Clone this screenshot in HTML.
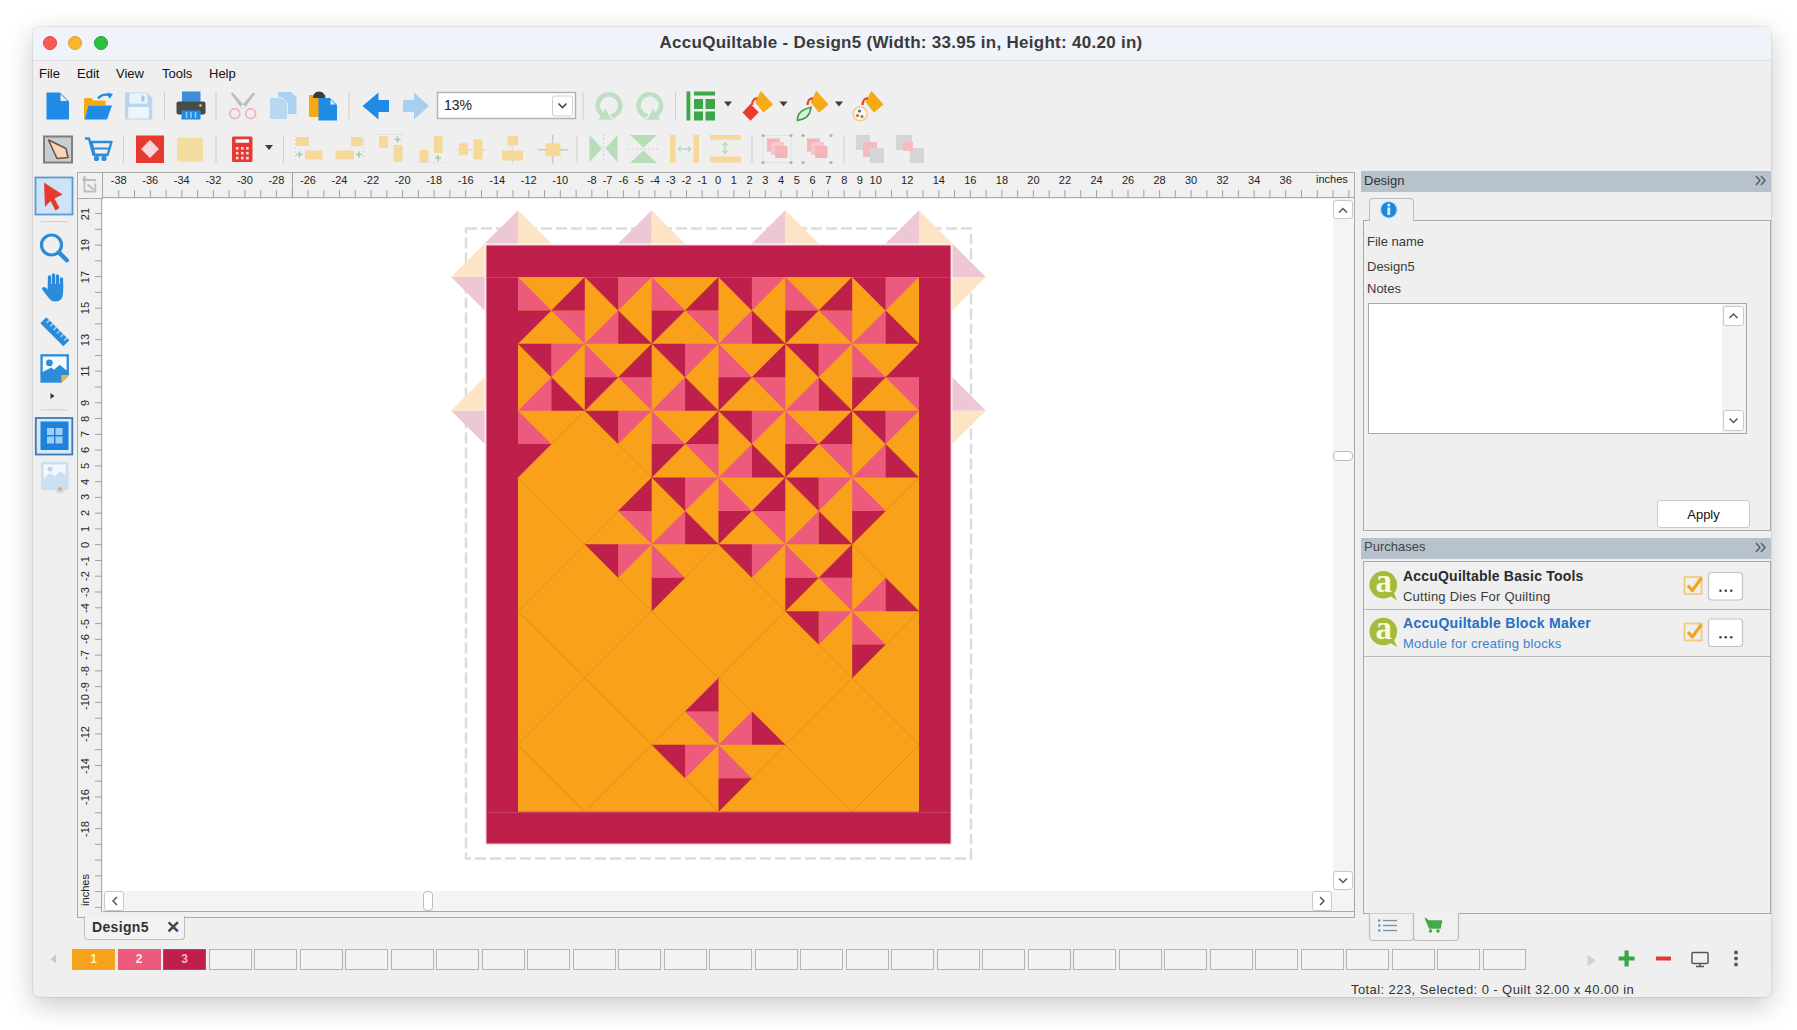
<!DOCTYPE html><html><head><meta charset="utf-8"><style>
*{box-sizing:border-box;margin:0;padding:0}
html,body{width:1797px;height:1030px;overflow:hidden;background:#fff;font-family:"Liberation Sans",sans-serif;color:#222}
.a{position:absolute}
.win{position:absolute;left:33px;top:27px;width:1738px;height:970px;border-radius:6px;background:#EFEFEF;box-shadow:0 8px 28px rgba(0,0,0,0.22),0 0 0 1px rgba(0,0,0,0.06);overflow:hidden}
.tl{position:absolute;top:36px;width:14px;height:14px;border-radius:50%}
.menu{position:absolute;top:66px;font-size:13px;color:#111}
.sep{position:absolute;width:1px;background:#CFCFCF}
.rl{position:absolute;font-size:11px;color:#1E1E1E;white-space:nowrap}
.sw{position:absolute;top:949px;width:43px;height:21px;border:1px solid #B4B4B4;background:#F3F3F3}
.btn{position:absolute;background:#fff;border:1px solid #C9C9C9;border-radius:3px}
</style></head><body>

<div class="win"></div>
<div class="a" style="left:33px;top:27px;width:1738px;height:34px;background:#F0F3FA;border-radius:6px 6px 0 0;border-bottom:1px solid #DCDDE2"></div>
<div class="tl" style="left:43px;background:#F45C55;border:1px solid #E0443E"></div>
<div class="tl" style="left:68px;background:#F8B72E;border:1px solid #DE9F1E"></div>
<div class="tl" style="left:94px;background:#2AC13F;border:1px solid #1EA52F"></div>
<div class="a" style="left:0;width:1797px;top:32.5px;text-align:center;font-size:17px;letter-spacing:0.28px;font-weight:bold;color:#3A3A3A;padding-left:5px">AccuQuiltable - Design5 (Width: 33.95 in, Height: 40.20 in)</div>
<div class="menu" style="left:39px">File</div>
<div class="menu" style="left:77px">Edit</div>
<div class="menu" style="left:116px">View</div>
<div class="menu" style="left:162px">Tools</div>
<div class="menu" style="left:209px">Help</div>
<svg class="a" style="left:0;top:0" width="1797" height="1030" viewBox="0 0 1797 1030">
<path d="M46.5,92.5 H60 L69,101.5 V119.5 H46.5Z" fill="#1F8BE6"/>
<path d="M60.5,94 V101 H67.5Z" fill="#DDF1FF"/>
<path d="M84,119.5 V99.5 Q84,98 85.5,98 H91 L93.5,100.5 H105.5 V105.5 H89Z" fill="#F5A913"/>
<path d="M84.5,119.5 L88.5,105.5 H112 L107,119.5Z" fill="#1F8BE6"/>
<path d="M98,98.5 Q103,93 109.5,95.5" stroke="#1F8BE6" stroke-width="2.2" fill="none"/><path d="M107,92.5 L113,94 L109.5,99Z" fill="#1F8BE6"/>
<path d="M125,92.5 H147 L152.2,97.7 V119.5 H125Z" fill="#B9D6EE"/>
<rect x="129.5" y="93.3" width="17.8" height="10.4" fill="#E6F4FC"/><rect x="141.5" y="95.5" width="3" height="6" rx="1" fill="#A9C9E3"/>
<rect x="128.2" y="107" width="20.6" height="11.5" fill="#EEF5FB"/>
<rect x="164.0" y="92" width="1" height="28" fill="#CDCDCD"/>
<rect x="182" y="91.5" width="18.5" height="11" fill="#3E8EDC"/>
<rect x="176.5" y="101.5" width="29" height="13" rx="2" fill="#4A4A4A"/>
<circle cx="200.5" cy="105.5" r="1.3" fill="#E8D44A"/>
<rect x="181.5" y="110.5" width="19" height="9" fill="#1F8BE6"/>
<path d="M186.5,112 V118 M191,112 V118 M195.5,112 V118" stroke="#8FD0FF" stroke-width="1.5"/>
<rect x="215.5" y="92" width="1" height="28" fill="#CDCDCD"/>
<path d="M230.8,93.5 L232.8,92.5 L246,107.5 L241.8,109Z M255.2,93.5 L253.2,92.5 L240,107.5 L244.2,109Z" fill="#BDBDBD"/>
<circle cx="234.8" cy="113.6" r="4.9" fill="none" stroke="#F0B8BE" stroke-width="1.9"/>
<circle cx="250.6" cy="113.6" r="4.9" fill="none" stroke="#F0B8BE" stroke-width="1.9"/>
<path d="M278,92 H291 L296.5,97.5 V114 H278Z" fill="#AED0EF"/>
<path d="M269.5,97.5 H282 L287.5,103 V119.5 H269.5Z" fill="#B9D7F1" stroke="#EEF5FB" stroke-width="0.8"/>
<rect x="309" y="95" width="17" height="22" fill="#F5A913"/>
<path d="M313,98 Q313,91.5 319,91.5 Q325,91.5 325,98Z" fill="#3B3B3B"/>
<path d="M318.5,98 H330 L337,105 V120.5 H318.5Z" fill="#1F8BE6"/>
<path d="M330.5,99.5 V104.5 H335.5Z" fill="#DDF1FF"/>
<rect x="348.5" y="92" width="1" height="27" fill="#CDCDCD"/>
<path d="M362.5,106 L378.5,92.5 V100 H389 V112 H378.5 V119.5Z" fill="#1F8BE6"/>
<path d="M429,106 L414,92.5 V100 H403 V112 H414 V119.5Z" fill="#A9CFF0"/>
<rect x="437.5" y="92.5" width="138" height="26" fill="#fff" stroke="#B3B3B3" stroke-width="1.5"/>
<rect x="552.5" y="96" width="20" height="20" rx="2" fill="#fff" stroke="#CFCFCF"/>
<path d="M558.5,103.5 L562.5,107.5 L566.5,103.5" stroke="#444" stroke-width="1.6" fill="none"/>
<rect x="582.5" y="92" width="1" height="28" fill="#CDCDCD"/>
<circle cx="609" cy="105.5" r="11.3" fill="none" stroke="#BFDFC2" stroke-width="4.6"/><path d="M598.5,119.8 L605.5,108.5 L613.5,119.8Z" fill="#BFDFC2"/><path d="M607,110 L612,119" stroke="#F2F5F2" stroke-width="1.4"/>
<circle cx="649.7" cy="105.5" r="11.3" fill="none" stroke="#BFDFC2" stroke-width="4.6"/><path d="M645,119.8 L653,108.5 L660,119.8Z" fill="#BFDFC2"/><path d="M651.5,110 L646.5,119" stroke="#F2F5F2" stroke-width="1.4"/>
<rect x="675.0" y="92" width="1" height="28" fill="#CDCDCD"/>
<rect x="686.5" y="91.5" width="3.8" height="29" fill="#3DA648"/><rect x="694" y="91.5" width="21" height="4" fill="#3DA648"/>
<rect x="694" y="99" width="9" height="10" fill="#3DA648"/><rect x="705.5" y="99" width="9.5" height="10" fill="#3DA648"/><rect x="694" y="111.5" width="9" height="9" fill="#3DA648"/><rect x="705.5" y="111.5" width="9.5" height="9" fill="#3DA648"/>
<path d="M724,101.5 H732 L728,106.5Z" fill="#3C3C3C"/>
<path d="M761,91.5 L772.5,104.5 L763.5,112 L755.5,102Z" fill="#F6AA14" stroke="#F6AA14" stroke-width="1" stroke-linejoin="round"/><path d="M752,105 Q752.5,98 757.5,98.5" stroke="#D24A32" stroke-width="2.2" fill="none"/>
<path d="M742.5,112.5 L750.5,104 L758.7,112.2 L750.5,120.7Z" fill="#EA3B30"/>
<path d="M779.5,101.5 H787.5 L783.5,106.5Z" fill="#3C3C3C"/>
<path d="M816.5,91.5 L828.0,104.5 L819.0,112 L811.0,102Z" fill="#F6AA14" stroke="#F6AA14" stroke-width="1" stroke-linejoin="round"/><path d="M807.5,105 Q808.0,98 813.0,98.5" stroke="#D24A32" stroke-width="2.2" fill="none"/>
<path d="M797.5,120.5 Q797,110.5 811,107.3 Q810,119 797.5,120.5Z" fill="#D8F2D8" stroke="#3E9A48" stroke-width="1.6"/>
<path d="M835,101.5 H843 L839,106.5Z" fill="#3C3C3C"/>
<path d="M871.5,91.5 L883.0,104.5 L874.0,112 L866.0,102Z" fill="#F6AA14" stroke="#F6AA14" stroke-width="1" stroke-linejoin="round"/><path d="M862.5,105 Q863.0,98 868.0,98.5" stroke="#D24A32" stroke-width="2.2" fill="none"/>
<circle cx="860.2" cy="113.8" r="7" fill="#FBF4EA" stroke="#F3CD85" stroke-width="1.5"/><circle cx="859.5" cy="111" r="1.6" fill="#3E6FC8"/><circle cx="857.5" cy="115.5" r="1.5" fill="#D8583A"/><circle cx="862" cy="116.5" r="1.5" fill="#5A9E4A"/>
<rect x="44" y="136.5" width="28" height="26" fill="#C9CDD2" stroke="#7F7F7F" stroke-width="2"/>
<path d="M48.5,140 L66,148.5 L68,157.5 L57,158.5Z" fill="#F9D6BB" stroke="#6E5444" stroke-width="1.6" stroke-linejoin="round"/>
<path d="M85,138.5 H89 L93.5,155 H107" stroke="#2D8BDC" stroke-width="2.4" fill="none" stroke-linejoin="round"/>
<path d="M91.5,142 H111.5 L107.5,155 H94.5Z" fill="none" stroke="#2D8BDC" stroke-width="2.4" stroke-linejoin="round"/><path d="M93,148.5 H109" stroke="#2D8BDC" stroke-width="2"/>
<circle cx="96.5" cy="158.5" r="2.6" fill="#2D8BDC"/><circle cx="104" cy="158.5" r="2.6" fill="#2D8BDC"/>
<rect x="123.0" y="136" width="1" height="27" fill="#CDCDCD"/>
<rect x="136" y="135.5" width="28" height="27.5" fill="#E8392F"/>
<path d="M150,140 L159,149 L150,158 L141,149Z" fill="#F8D7DB"/>
<rect x="177" y="137.5" width="26" height="24" rx="2.5" fill="#F5DDA0"/>
<rect x="215.5" y="136" width="1" height="27" fill="#CDCDCD"/>
<rect x="232" y="136.5" width="20.5" height="25.5" rx="1.5" fill="#E53935"/>
<rect x="235.5" y="139.3" width="13.5" height="3.4" fill="#fff"/>
<rect x="235.89999999999998" y="147.0" width="2.6" height="2.6" fill="#FFD9D9"/>
<rect x="241.0" y="147.0" width="2.6" height="2.6" fill="#FFD9D9"/>
<rect x="246.1" y="147.0" width="2.6" height="2.6" fill="#FFD9D9"/>
<rect x="235.89999999999998" y="151.89999999999998" width="2.6" height="2.6" fill="#FFD9D9"/>
<rect x="241.0" y="151.89999999999998" width="2.6" height="2.6" fill="#FFD9D9"/>
<rect x="246.1" y="151.89999999999998" width="2.6" height="2.6" fill="#FFD9D9"/>
<rect x="235.89999999999998" y="156.79999999999998" width="2.6" height="2.6" fill="#FFD9D9"/>
<rect x="241.0" y="156.79999999999998" width="2.6" height="2.6" fill="#FFD9D9"/>
<rect x="246.1" y="156.79999999999998" width="2.6" height="2.6" fill="#FFD9D9"/>
<path d="M265,145.0 H273 L269,150.0Z" fill="#3C3C3C"/>
<rect x="283.0" y="136" width="1" height="27" fill="#CDCDCD"/>
<path d="M295.5,135 V163" stroke="#D8D8D8" stroke-dasharray="2 2"/><rect x="296" y="137" width="13" height="9" fill="#F6D998"/><rect x="305" y="150.5" width="17.5" height="9" fill="#F6D998"/><path d="M296.5,154.5 H302.5 M299.5,151.5 V157.5" stroke="#9ACF9E" stroke-width="1.5"/>
<path d="M363.5,135 V163" stroke="#D8D8D8" stroke-dasharray="2 2"/><rect x="351" y="137" width="11.5" height="9" fill="#F6D998"/><rect x="335.5" y="150.5" width="18.5" height="9" fill="#F6D998"/><path d="M356,154.5 H362 M359,151.5 V157.5" stroke="#9ACF9E" stroke-width="1.5"/>
<path d="M376.5,134.5 H405" stroke="#D8D8D8" stroke-dasharray="2 2"/><rect x="379" y="136" width="9" height="12" fill="#F6D998"/><rect x="393.5" y="145" width="9" height="17" fill="#F6D998"/><path d="M394.5,139.5 H400.5 M397.5,136.5 V142.5" stroke="#9ACF9E" stroke-width="1.5"/>
<path d="M417,162.5 H446" stroke="#D8D8D8" stroke-dasharray="2 2"/><rect x="419.5" y="150" width="9" height="12" fill="#F6D998"/><rect x="434" y="136" width="8.5" height="17" fill="#F6D998"/><path d="M435,158 H441 M438,155 V161" stroke="#9ACF9E" stroke-width="1.5"/>
<path d="M456.5,149.8 H486" stroke="#D8D8D8"/><rect x="459" y="143.3" width="9" height="12" fill="#F6D998"/><rect x="473.5" y="139.3" width="9" height="20" fill="#F6D998"/>
<path d="M512.3,134.5 V164.5" stroke="#D8D8D8"/><rect x="507.5" y="136" width="10.5" height="9.5" fill="#F6D998"/><rect x="502" y="150.5" width="21" height="10" fill="#F6D998"/>
<path d="M537.5,149.8 H568 M552.6,135 V163.5" stroke="#C9C9C9" stroke-width="1.5"/><rect x="545.5" y="143.3" width="15" height="13" rx="2" fill="#F6D998"/>
<rect x="576.5" y="136" width="1" height="27" fill="#CDCDCD"/>
<path d="M589.5,135 L602,148.5 L589.5,162Z M617.5,135 L605.5,148.5 L617.5,162Z" fill="#B5DDB8"/><path d="M603.5,134 V163" stroke="#CFCFCF" stroke-dasharray="2 2"/>
<path d="M630,135 H657 L643.5,147.5Z M630,163 H657 L643.5,150.5Z" fill="#B5DDB8"/><path d="M628,149 H660" stroke="#CFCFCF" stroke-dasharray="2 2"/>
<rect x="670" y="135" width="5.5" height="28" fill="#F6D998"/><rect x="693.5" y="135" width="5.5" height="28" fill="#F6D998"/><path d="M678,149 H691 M678,149 l3,-2.5 M678,149 l3,2.5 M691,149 l-3,-2.5 M691,149 l-3,2.5" stroke="#B5DDB8" stroke-width="1.4"/>
<rect x="710" y="135" width="31" height="4.8" fill="#F6D998"/><rect x="710" y="156.5" width="31" height="6" fill="#F6D998"/><path d="M725,142.5 V153.5 M725,142.5 l-2.5,3 M725,142.5 l2.5,3 M725,153.5 l-2.5,-3 M725,153.5 l2.5,-3" stroke="#B5DDB8" stroke-width="1.4"/>
<rect x="751.5" y="136" width="1" height="27" fill="#CDCDCD"/>
<rect x="763" y="135.5" width="28" height="27" fill="none" stroke="#DADDE0" stroke-width="0.8"/>
<rect x="767" y="138.5" width="13" height="13" fill="#F5B4B8"/><rect x="771" y="142" width="13" height="13" fill="#F7C6CC"/><rect x="775" y="146" width="12.5" height="12" fill="#F5B4B8"/>
<circle cx="803" cy="135.5" r="1.6" fill="#B0B0B0"/>
<circle cx="831" cy="135.5" r="1.6" fill="#B0B0B0"/>
<circle cx="803" cy="162.5" r="1.6" fill="#B0B0B0"/>
<circle cx="831" cy="162.5" r="1.6" fill="#B0B0B0"/>
<rect x="807" y="138.5" width="13" height="13" fill="#F5B4B8"/><rect x="811" y="142" width="13" height="13" fill="#F7C6CC"/><rect x="815" y="146" width="12.5" height="12" fill="#F5B4B8"/>
<circle cx="763" cy="135.5" r="1.6" fill="#B0B0B0"/>
<circle cx="791" cy="135.5" r="1.6" fill="#B0B0B0"/>
<circle cx="763" cy="162.5" r="1.6" fill="#B0B0B0"/>
<circle cx="791" cy="162.5" r="1.6" fill="#B0B0B0"/>
<rect x="843.5" y="136" width="1" height="27" fill="#CDCDCD"/>
<rect x="856" y="135" width="14" height="15" fill="#D5D5D5"/><rect x="863" y="142" width="14" height="15" fill="#F4BBC2"/><rect x="870" y="148" width="14" height="15" fill="#D5D5D5"/>
<rect x="896" y="135" width="16" height="15" fill="#D5D5D5"/><rect x="910" y="148" width="14" height="15" fill="#D5D5D5"/><rect x="903" y="142" width="10" height="9" fill="#F4BBC2"/>
<rect x="35.5" y="177.5" width="37" height="37" fill="#CFE3F6" stroke="#5B9BD5" stroke-width="1.8"/>
<path d="M44,182.5 L62.5,194.5 L54.5,198.5 L59.5,208 L55.5,210.5 L50.5,201 L45,207Z" fill="#E8392F"/>
<rect x="40.5" y="221" width="28" height="1.2" fill="#D3D3D3"/>
<circle cx="51.5" cy="245" r="10" fill="none" stroke="#2D8BDC" stroke-width="3.2"/><path d="M58.8,252.3 L66.8,260.3" stroke="#2D8BDC" stroke-width="4.4" stroke-linecap="round"/>
<path d="M49.5,288 V277 M53.5,286 V275 M57.5,286 V276 M61.5,288 V279" stroke="#2D8BDC" stroke-width="3.3" stroke-linecap="round"/>
<path d="M47.8,284 H63.2 V292 Q63.2,301.5 55.5,301.5 Q51,301.5 48,297 L42.5,290 Q41.2,288 43,287.2 Q45,286.5 47.8,289.5Z" fill="#2D8BDC"/>
<path d="M40.3,323.2 L46.3,317.2 L69.3,340.2 L63.3,346.2Z" fill="#2D8BDC"/>
<path d="M46.5,323 L49.5,320 M50,326.5 L53,323.5 M53.5,330 L56.5,327 M57,333.5 L60,330.5 M60.5,337 L63.5,334 M64,340.5 L67,337.5" stroke="#9ED3FA" stroke-width="1.6"/>
<rect x="40.4" y="354.2" width="28.5" height="28.5" fill="#2D8BDC"/>
<path d="M42.7,356.5 H66.6 V370.5 L59.6,364.8 L54,369.8 L51.2,367.5 L42.7,372Z" fill="#F4FAFF"/>
<circle cx="49.4" cy="362.9" r="3.3" fill="#2D8BDC"/>
<path d="M61.2,383.2 H69.4 V374.8Z" fill="#EFEFEF"/><path d="M61.4,382.7 V375 H68.9Z" fill="#F2B63A"/>
<path d="M50.5,393 L54.5,396 L50.5,399Z" fill="#333"/>
<rect x="40.5" y="409.2" width="27" height="1.2" fill="#D3D3D3"/>
<rect x="35.8" y="418" width="36.5" height="36.5" fill="#D3EAFB" stroke="#3F78B5" stroke-width="1.8"/>
<rect x="40.5" y="421.5" width="28" height="28.5" fill="#1E82DA"/>
<rect x="47" y="428" width="7" height="7" fill="#9CCFF7"/><rect x="55.5" y="428" width="7" height="7" fill="#9CCFF7"/><rect x="47" y="436.5" width="7" height="7" fill="#9CCFF7"/><rect x="55.5" y="436.5" width="7" height="7" fill="#9CCFF7"/>
<rect x="41" y="462" width="27.5" height="28" fill="#C9E0F3"/><rect x="43.5" y="464.5" width="22" height="14" fill="#F2F8FD"/><circle cx="50" cy="469" r="2.5" fill="#B8D6F0"/><path d="M43.5,478.5 L50,473 L55,476 L60,471 L65.5,475 V478.5Z" fill="#C9E0F3"/><circle cx="60" cy="489" r="4.5" fill="#D9D9D9"/><circle cx="60" cy="489" r="2" fill="#B5B5B5"/>
</svg>
<div class="a" style="left:444px;top:97px;font-size:14px;color:#222">13%</div>
<div class="a" style="left:77px;top:172px;width:1278px;height:746px;border:1px solid #A9A9A9;background:#F0F0F0"></div>
<div class="a" style="left:103px;top:199px;width:1230px;height:692px;background:#fff"></div>
<div class="a" style="left:78px;top:173px;width:25px;height:26px;border-right:1px solid #A9A9A9;border-bottom:1px solid #A9A9A9;background:#F0F0F0"></div>
<div class="a" style="left:103px;top:173px;width:1251px;height:25px;border-bottom:1px solid #A9A9A9;background:#F0F0F0"></div>
<div class="a" style="left:78px;top:199px;width:24px;height:713px;border-right:1px solid #A9A9A9;background:#F0F0F0"></div>
<svg class="a" style="left:0;top:0" width="1797" height="1030"><path d="M118.7,190 V198 M134.5,190 V198 M150.3,190 V198 M166.1,190 V198 M181.8,190 V198 M197.6,190 V198 M213.4,190 V198 M229.1,190 V198 M244.9,190 V198 M260.7,190 V198 M276.4,190 V198 M292.2,190 V198 M308.0,190 V198 M323.8,190 V198 M339.5,190 V198 M355.3,190 V198 M371.1,190 V198 M386.8,190 V198 M402.6,190 V198 M418.4,190 V198 M434.1,190 V198 M449.9,190 V198 M465.7,190 V198 M481.5,190 V198 M497.2,190 V198 M513.0,190 V198 M528.8,190 V198 M544.5,190 V198 M560.3,190 V198 M576.1,190 V198 M591.8,190 V198 M607.6,190 V198 M623.4,190 V198 M639.1,190 V198 M654.9,190 V198 M670.7,190 V198 M686.5,190 V198 M702.2,190 V198 M718.0,190 V198 M733.8,190 V198 M749.5,190 V198 M765.3,190 V198 M781.1,190 V198 M796.9,190 V198 M812.6,190 V198 M828.4,190 V198 M844.2,190 V198 M859.9,190 V198 M875.7,190 V198 M891.5,190 V198 M907.2,190 V198 M923.0,190 V198 M938.8,190 V198 M954.5,190 V198 M970.3,190 V198 M986.1,190 V198 M1001.9,190 V198 M1017.6,190 V198 M1033.4,190 V198 M1049.2,190 V198 M1064.9,190 V198 M1080.7,190 V198 M1096.5,190 V198 M1112.2,190 V198 M1128.0,190 V198 M1143.8,190 V198 M1159.6,190 V198 M1175.3,190 V198 M1191.1,190 V198 M1206.9,190 V198 M1222.6,190 V198 M1238.4,190 V198 M1254.2,190 V198 M1269.9,190 V198 M1285.7,190 V198 M1301.5,190 V198 M1317.3,190 V198 M1333.0,190 V198 M1348.8,190 V198 M95,907.4 H102 M95,891.6 H102 M95,875.9 H102 M95,860.1 H102 M95,844.3 H102 M95,828.6 H102 M95,812.8 H102 M95,797.0 H102 M95,781.2 H102 M95,765.5 H102 M95,749.7 H102 M95,733.9 H102 M95,718.2 H102 M95,702.4 H102 M95,686.6 H102 M95,670.9 H102 M95,655.1 H102 M95,639.3 H102 M95,623.6 H102 M95,607.8 H102 M95,592.0 H102 M95,576.2 H102 M95,560.5 H102 M95,544.7 H102 M95,528.9 H102 M95,513.2 H102 M95,497.4 H102 M95,481.6 H102 M95,465.9 H102 M95,450.1 H102 M95,434.3 H102 M95,418.5 H102 M95,402.8 H102 M95,387.0 H102 M95,371.2 H102 M95,355.5 H102 M95,339.7 H102 M95,323.9 H102 M95,308.2 H102 M95,292.4 H102 M95,276.6 H102 M95,260.8 H102 M95,245.1 H102 M95,229.3 H102 M95,213.5 H102" stroke="#A0A0A0" stroke-width="1"/><path d="M292.5,173 V198" stroke="#A0A0A0"/></svg>
<div class="rl" style="left:98.7px;width:40px;text-align:center;top:174px">-38</div>
<div class="rl" style="left:130.3px;width:40px;text-align:center;top:174px">-36</div>
<div class="rl" style="left:161.8px;width:40px;text-align:center;top:174px">-34</div>
<div class="rl" style="left:193.4px;width:40px;text-align:center;top:174px">-32</div>
<div class="rl" style="left:224.9px;width:40px;text-align:center;top:174px">-30</div>
<div class="rl" style="left:256.4px;width:40px;text-align:center;top:174px">-28</div>
<div class="rl" style="left:288.0px;width:40px;text-align:center;top:174px">-26</div>
<div class="rl" style="left:319.5px;width:40px;text-align:center;top:174px">-24</div>
<div class="rl" style="left:351.1px;width:40px;text-align:center;top:174px">-22</div>
<div class="rl" style="left:382.6px;width:40px;text-align:center;top:174px">-20</div>
<div class="rl" style="left:414.1px;width:40px;text-align:center;top:174px">-18</div>
<div class="rl" style="left:445.7px;width:40px;text-align:center;top:174px">-16</div>
<div class="rl" style="left:477.2px;width:40px;text-align:center;top:174px">-14</div>
<div class="rl" style="left:508.8px;width:40px;text-align:center;top:174px">-12</div>
<div class="rl" style="left:540.3px;width:40px;text-align:center;top:174px">-10</div>
<div class="rl" style="left:571.8px;width:40px;text-align:center;top:174px">-8</div>
<div class="rl" style="left:587.6px;width:40px;text-align:center;top:174px">-7</div>
<div class="rl" style="left:603.4px;width:40px;text-align:center;top:174px">-6</div>
<div class="rl" style="left:619.1px;width:40px;text-align:center;top:174px">-5</div>
<div class="rl" style="left:634.9px;width:40px;text-align:center;top:174px">-4</div>
<div class="rl" style="left:650.7px;width:40px;text-align:center;top:174px">-3</div>
<div class="rl" style="left:666.5px;width:40px;text-align:center;top:174px">-2</div>
<div class="rl" style="left:682.2px;width:40px;text-align:center;top:174px">-1</div>
<div class="rl" style="left:698.0px;width:40px;text-align:center;top:174px">0</div>
<div class="rl" style="left:713.8px;width:40px;text-align:center;top:174px">1</div>
<div class="rl" style="left:729.5px;width:40px;text-align:center;top:174px">2</div>
<div class="rl" style="left:745.3px;width:40px;text-align:center;top:174px">3</div>
<div class="rl" style="left:761.1px;width:40px;text-align:center;top:174px">4</div>
<div class="rl" style="left:776.9px;width:40px;text-align:center;top:174px">5</div>
<div class="rl" style="left:792.6px;width:40px;text-align:center;top:174px">6</div>
<div class="rl" style="left:808.4px;width:40px;text-align:center;top:174px">7</div>
<div class="rl" style="left:824.2px;width:40px;text-align:center;top:174px">8</div>
<div class="rl" style="left:839.9px;width:40px;text-align:center;top:174px">9</div>
<div class="rl" style="left:855.7px;width:40px;text-align:center;top:174px">10</div>
<div class="rl" style="left:887.2px;width:40px;text-align:center;top:174px">12</div>
<div class="rl" style="left:918.8px;width:40px;text-align:center;top:174px">14</div>
<div class="rl" style="left:950.3px;width:40px;text-align:center;top:174px">16</div>
<div class="rl" style="left:981.9px;width:40px;text-align:center;top:174px">18</div>
<div class="rl" style="left:1013.4px;width:40px;text-align:center;top:174px">20</div>
<div class="rl" style="left:1044.9px;width:40px;text-align:center;top:174px">22</div>
<div class="rl" style="left:1076.5px;width:40px;text-align:center;top:174px">24</div>
<div class="rl" style="left:1108.0px;width:40px;text-align:center;top:174px">26</div>
<div class="rl" style="left:1139.6px;width:40px;text-align:center;top:174px">28</div>
<div class="rl" style="left:1171.1px;width:40px;text-align:center;top:174px">30</div>
<div class="rl" style="left:1202.6px;width:40px;text-align:center;top:174px">32</div>
<div class="rl" style="left:1234.2px;width:40px;text-align:center;top:174px">34</div>
<div class="rl" style="left:1265.7px;width:40px;text-align:center;top:174px">36</div>
<div class="rl" style="left:1316px;top:173px">inches</div>
<div class="rl" style="left:66px;top:206.5px;width:40px;height:14px;text-align:center;transform:rotate(-90deg)">21</div>
<div class="rl" style="left:66px;top:238.1px;width:40px;height:14px;text-align:center;transform:rotate(-90deg)">19</div>
<div class="rl" style="left:66px;top:269.6px;width:40px;height:14px;text-align:center;transform:rotate(-90deg)">17</div>
<div class="rl" style="left:66px;top:301.2px;width:40px;height:14px;text-align:center;transform:rotate(-90deg)">15</div>
<div class="rl" style="left:66px;top:332.7px;width:40px;height:14px;text-align:center;transform:rotate(-90deg)">13</div>
<div class="rl" style="left:66px;top:364.2px;width:40px;height:14px;text-align:center;transform:rotate(-90deg)">11</div>
<div class="rl" style="left:66px;top:395.8px;width:40px;height:14px;text-align:center;transform:rotate(-90deg)">9</div>
<div class="rl" style="left:66px;top:411.5px;width:40px;height:14px;text-align:center;transform:rotate(-90deg)">8</div>
<div class="rl" style="left:66px;top:427.3px;width:40px;height:14px;text-align:center;transform:rotate(-90deg)">7</div>
<div class="rl" style="left:66px;top:443.1px;width:40px;height:14px;text-align:center;transform:rotate(-90deg)">6</div>
<div class="rl" style="left:66px;top:458.9px;width:40px;height:14px;text-align:center;transform:rotate(-90deg)">5</div>
<div class="rl" style="left:66px;top:474.6px;width:40px;height:14px;text-align:center;transform:rotate(-90deg)">4</div>
<div class="rl" style="left:66px;top:490.4px;width:40px;height:14px;text-align:center;transform:rotate(-90deg)">3</div>
<div class="rl" style="left:66px;top:506.2px;width:40px;height:14px;text-align:center;transform:rotate(-90deg)">2</div>
<div class="rl" style="left:66px;top:521.9px;width:40px;height:14px;text-align:center;transform:rotate(-90deg)">1</div>
<div class="rl" style="left:66px;top:537.7px;width:40px;height:14px;text-align:center;transform:rotate(-90deg)">0</div>
<div class="rl" style="left:66px;top:553.5px;width:40px;height:14px;text-align:center;transform:rotate(-90deg)">-1</div>
<div class="rl" style="left:66px;top:569.2px;width:40px;height:14px;text-align:center;transform:rotate(-90deg)">-2</div>
<div class="rl" style="left:66px;top:585.0px;width:40px;height:14px;text-align:center;transform:rotate(-90deg)">-3</div>
<div class="rl" style="left:66px;top:600.8px;width:40px;height:14px;text-align:center;transform:rotate(-90deg)">-4</div>
<div class="rl" style="left:66px;top:616.6px;width:40px;height:14px;text-align:center;transform:rotate(-90deg)">-5</div>
<div class="rl" style="left:66px;top:632.3px;width:40px;height:14px;text-align:center;transform:rotate(-90deg)">-6</div>
<div class="rl" style="left:66px;top:648.1px;width:40px;height:14px;text-align:center;transform:rotate(-90deg)">-7</div>
<div class="rl" style="left:66px;top:663.9px;width:40px;height:14px;text-align:center;transform:rotate(-90deg)">-8</div>
<div class="rl" style="left:66px;top:679.6px;width:40px;height:14px;text-align:center;transform:rotate(-90deg)">-9</div>
<div class="rl" style="left:66px;top:695.4px;width:40px;height:14px;text-align:center;transform:rotate(-90deg)">-10</div>
<div class="rl" style="left:66px;top:726.9px;width:40px;height:14px;text-align:center;transform:rotate(-90deg)">-12</div>
<div class="rl" style="left:66px;top:758.5px;width:40px;height:14px;text-align:center;transform:rotate(-90deg)">-14</div>
<div class="rl" style="left:66px;top:790.0px;width:40px;height:14px;text-align:center;transform:rotate(-90deg)">-16</div>
<div class="rl" style="left:66px;top:821.6px;width:40px;height:14px;text-align:center;transform:rotate(-90deg)">-18</div>
<div class="rl" style="left:66px;top:883px;width:40px;height:14px;text-align:center;transform:rotate(-90deg)">inches</div>
<svg style="position:absolute;left:0;top:0" width="1797" height="1030" viewBox="0 0 1797 1030">
<rect x="466" y="228.5" width="505" height="630" fill="none" stroke="#DCDCDC" stroke-width="2.5" stroke-dasharray="11 4"/>
<path d="M484.6,243.6 L518.0,210.2 L518.0,243.6ZM618.2,243.6 L651.7,210.2 L651.7,243.6ZM751.9,243.6 L785.3,210.2 L785.3,243.6ZM885.6,243.6 L919.0,210.2 L919.0,243.6ZM451.2,277.0 L484.6,277.0 L484.6,310.4ZM952.4,243.6 L985.8,277.0 L952.4,277.0ZM451.2,410.7 L484.6,410.7 L484.6,444.1ZM952.4,377.2 L985.8,410.7 L952.4,410.7Z" fill="#EDC7D3"/>
<path d="M518.0,210.2 L518.0,243.6 L551.4,243.6ZM651.7,210.2 L651.7,243.6 L685.1,243.6ZM785.3,210.2 L785.3,243.6 L818.7,243.6ZM919.0,210.2 L919.0,243.6 L952.4,243.6ZM451.2,277.0 L484.6,243.6 L484.6,277.0ZM952.4,277.0 L985.8,277.0 L952.4,310.4ZM451.2,410.7 L484.6,377.2 L484.6,410.7ZM952.4,410.7 L985.8,410.7 L952.4,444.1Z" fill="#FCE4C4"/>
<rect x="486" y="245" width="465" height="599" fill="#BE1F4B" stroke="#F7C9D2" stroke-width="1"/>
<rect x="518.0" y="277.0" width="401.0" height="534.7" fill="#F9A11B"/>
<path d="M518.0,744.8 L584.8,811.7M518.0,611.2 L718.5,811.7M518.0,477.5 L852.2,811.7M518.0,343.8 L919.0,744.8M584.8,277.0 L919.0,611.2M518.0,343.8 L584.8,277.0M718.5,277.0 L919.0,477.5M518.0,477.5 L718.5,277.0M852.2,277.0 L919.0,343.8M518.0,611.2 L852.2,277.0M518.0,744.8 L919.0,343.8M584.8,811.7 L919.0,477.5M718.5,811.7 L919.0,611.2M852.2,811.7 L919.0,744.8" stroke="#D98810" stroke-width="1" stroke-opacity="0.75" fill="none"/>
<path d="M518.0,277.0 L518.0,310.4 L551.4,310.4ZM618.2,277.0 L651.7,277.0 L618.2,310.4ZM651.7,277.0 L651.7,310.4 L685.1,310.4ZM751.9,277.0 L785.3,277.0 L751.9,310.4ZM785.3,277.0 L785.3,310.4 L818.7,310.4ZM885.6,277.0 L919.0,277.0 L885.6,310.4ZM551.4,310.4 L584.8,310.4 L584.8,343.8ZM618.2,310.4 L618.2,343.8 L584.8,343.8ZM685.1,310.4 L718.5,310.4 L718.5,343.8ZM751.9,310.4 L751.9,343.8 L718.5,343.8ZM818.8,310.4 L852.2,310.4 L852.2,343.8ZM885.6,310.4 L885.6,343.8 L852.2,343.8ZM551.4,343.8 L584.8,343.8 L551.4,377.2ZM584.8,343.8 L584.8,377.2 L618.2,377.2ZM685.1,343.8 L718.5,343.8 L685.1,377.2ZM718.5,343.8 L718.5,377.2 L751.9,377.2ZM818.8,343.8 L852.2,343.8 L818.8,377.2ZM852.2,343.8 L852.2,377.2 L885.6,377.2ZM551.4,377.2 L551.4,410.7 L518.0,410.7ZM618.2,377.2 L651.7,377.2 L651.7,410.7ZM685.1,377.2 L685.1,410.7 L651.7,410.7ZM751.9,377.2 L785.3,377.2 L785.3,410.7ZM818.7,377.2 L818.7,410.7 L785.3,410.7ZM885.6,377.2 L919.0,377.2 L919.0,410.7ZM518.0,410.7 L518.0,444.1 L551.4,444.1ZM618.2,410.7 L651.7,410.7 L618.2,444.1ZM651.7,410.7 L651.7,444.1 L685.1,444.1ZM751.9,410.7 L785.3,410.7 L751.9,444.1ZM785.3,410.7 L785.3,444.1 L818.7,444.1ZM885.6,410.7 L919.0,410.7 L885.6,444.1ZM685.1,444.1 L718.5,444.1 L718.5,477.5ZM751.9,444.1 L751.9,477.5 L718.5,477.5ZM818.8,444.1 L852.2,444.1 L852.2,477.5ZM885.6,444.1 L885.6,477.5 L852.2,477.5ZM685.1,477.5 L718.5,477.5 L685.1,510.9ZM718.5,477.5 L718.5,510.9 L751.9,510.9ZM818.8,477.5 L852.2,477.5 L818.8,510.9ZM852.2,477.5 L852.2,510.9 L885.6,510.9ZM618.2,510.9 L651.7,510.9 L651.7,544.3ZM685.1,510.9 L685.1,544.3 L651.7,544.3ZM751.9,510.9 L785.3,510.9 L785.3,544.3ZM818.7,510.9 L818.7,544.3 L785.3,544.3ZM618.2,544.3 L651.7,544.3 L618.2,577.7ZM651.7,544.3 L651.7,577.7 L685.1,577.7ZM751.9,544.3 L785.3,544.3 L751.9,577.7ZM785.3,544.3 L785.3,577.7 L818.7,577.7ZM818.8,577.8 L852.2,577.8 L852.2,611.2ZM885.6,577.8 L885.6,611.2 L852.2,611.2ZM818.8,611.2 L852.2,611.2 L818.8,644.6ZM852.2,611.2 L852.2,644.6 L885.6,644.6ZM685.1,711.4 L718.5,711.4 L718.5,744.8ZM751.9,711.4 L751.9,744.8 L718.5,744.8ZM685.1,744.8 L718.5,744.8 L685.1,778.2ZM718.5,744.8 L718.5,778.2 L751.9,778.2Z" fill="#EC5B7B"/>
<path d="M584.8,277.0 L584.8,310.4 L551.4,310.4ZM584.8,277.0 L618.2,277.0 L618.2,310.4ZM718.5,277.0 L718.5,310.4 L685.1,310.4ZM718.5,277.0 L751.9,277.0 L751.9,310.4ZM852.2,277.0 L852.2,310.4 L818.8,310.4ZM852.2,277.0 L885.6,277.0 L885.6,310.4ZM518.0,310.4 L551.4,310.4 L518.0,343.8ZM618.2,310.4 L618.2,343.8 L651.7,343.8ZM651.7,310.4 L685.1,310.4 L651.7,343.8ZM751.9,310.4 L751.9,343.8 L785.3,343.8ZM785.3,310.4 L818.7,310.4 L785.3,343.8ZM885.6,310.4 L885.6,343.8 L919.0,343.8ZM518.0,343.8 L551.4,343.8 L551.4,377.2ZM651.7,343.8 L651.7,377.2 L618.2,377.2ZM651.7,343.8 L685.1,343.8 L685.1,377.2ZM785.3,343.8 L785.3,377.2 L751.9,377.2ZM785.3,343.8 L818.7,343.8 L818.7,377.2ZM919.0,343.8 L919.0,377.2 L885.6,377.2ZM551.4,377.2 L551.4,410.7 L584.8,410.7ZM584.8,377.2 L618.2,377.2 L584.8,410.7ZM685.1,377.2 L685.1,410.7 L718.5,410.7ZM718.5,377.2 L751.9,377.2 L718.5,410.7ZM818.8,377.2 L818.8,410.7 L852.2,410.7ZM852.2,377.2 L885.6,377.2 L852.2,410.7ZM584.8,410.7 L618.2,410.7 L618.2,444.1ZM718.5,410.7 L718.5,444.1 L685.1,444.1ZM718.5,410.7 L751.9,410.7 L751.9,444.1ZM852.2,410.7 L852.2,444.1 L818.8,444.1ZM852.2,410.7 L885.6,410.7 L885.6,444.1ZM518.0,444.1 L551.4,444.1 L518.0,477.5ZM651.7,444.1 L685.1,444.1 L651.7,477.5ZM751.9,444.1 L751.9,477.5 L785.3,477.5ZM785.3,444.1 L818.7,444.1 L785.3,477.5ZM885.6,444.1 L885.6,477.5 L919.0,477.5ZM651.7,477.5 L651.7,510.9 L618.2,510.9ZM651.7,477.5 L685.1,477.5 L685.1,510.9ZM785.3,477.5 L785.3,510.9 L751.9,510.9ZM785.3,477.5 L818.7,477.5 L818.7,510.9ZM685.1,510.9 L685.1,544.3 L718.5,544.3ZM718.5,510.9 L751.9,510.9 L718.5,544.3ZM818.8,510.9 L818.8,544.3 L852.2,544.3ZM852.2,510.9 L885.6,510.9 L852.2,544.3ZM584.8,544.3 L618.2,544.3 L618.2,577.7ZM718.5,544.3 L751.9,544.3 L751.9,577.7ZM852.2,544.3 L852.2,577.7 L818.8,577.7ZM651.7,577.8 L685.1,577.8 L651.7,611.2ZM785.3,577.8 L818.7,577.8 L785.3,611.2ZM885.6,577.8 L885.6,611.2 L919.0,611.2ZM785.3,611.2 L818.7,611.2 L818.7,644.6ZM852.2,644.6 L885.6,644.6 L852.2,678.0ZM718.5,678.0 L718.5,711.4 L685.1,711.4ZM751.9,711.4 L751.9,744.8 L785.3,744.8ZM651.7,744.8 L685.1,744.8 L685.1,778.2ZM718.5,778.2 L751.9,778.2 L718.5,811.7Z" fill="#BE1F4B"/>
<path d="M486,277.5 H951 M486,812.5 H951" stroke="#E07A98" stroke-width="1" stroke-opacity="0.35"/>
</svg>
<div class="a" style="left:1333px;top:199px;width:21px;height:692px;background:#F4F4F4"></div>
<div class="btn" style="left:1333px;top:200px;width:20px;height:19px"></div>
<div class="btn" style="left:1333px;top:871px;width:20px;height:19px"></div>
<div class="a" style="left:1333px;top:451px;width:20px;height:10px;border:1px solid #BDBDBD;border-radius:4px;background:#fff"></div>
<div class="a" style="left:103px;top:891px;width:1251px;height:21px;background:#F4F4F4;border-bottom:1px solid #A9A9A9"></div>
<div class="btn" style="left:104px;top:891px;width:20px;height:20px"></div>
<div class="btn" style="left:1312px;top:891px;width:20px;height:20px"></div>
<div class="a" style="left:423px;top:891px;width:10px;height:20px;border:1px solid #BDBDBD;border-radius:4px;background:#fff"></div>
<div class="a" style="left:84px;top:916px;width:101px;height:24px;border:1px solid #BDBDBD;border-top:none;border-radius:0 0 4px 4px;background:#F2F2F2"></div>
<div class="a" style="left:92px;top:919px;font-size:14px;font-weight:bold;letter-spacing:0.35px;color:#333">Design5</div>
<div class="a" style="left:166px;top:917px;font-size:17px;font-weight:bold;color:#444">&#x2715;</div>
<div class="sw" style="left:72.0px;background:#F7A21C;border-color:#F7A21C;color:#FFE0E6;font-size:12px;font-weight:bold;text-align:center;line-height:19px"><span style="color:#FFF3B0">1</span></div>
<div class="sw" style="left:117.5px;background:#EC5B7B;border-color:#EC5B7B;color:#FFE0E6;font-size:12px;font-weight:bold;text-align:center;line-height:19px"><span style="color:#FFE8EE">2</span></div>
<div class="sw" style="left:163.0px;background:#BE1F4B;border-color:#4C6EA8;color:#FFE0E6;font-size:12px;font-weight:bold;text-align:center;line-height:19px"><span style="color:#FFB3C6">3</span></div>
<div class="sw" style="left:208.5px;background:#F3F3F3;border-color:#B4B4B4;color:#FFE0E6;font-size:12px;font-weight:bold;text-align:center;line-height:19px"></div>
<div class="sw" style="left:254.0px;background:#F3F3F3;border-color:#B4B4B4;color:#FFE0E6;font-size:12px;font-weight:bold;text-align:center;line-height:19px"></div>
<div class="sw" style="left:299.5px;background:#F3F3F3;border-color:#B4B4B4;color:#FFE0E6;font-size:12px;font-weight:bold;text-align:center;line-height:19px"></div>
<div class="sw" style="left:345.0px;background:#F3F3F3;border-color:#B4B4B4;color:#FFE0E6;font-size:12px;font-weight:bold;text-align:center;line-height:19px"></div>
<div class="sw" style="left:390.5px;background:#F3F3F3;border-color:#B4B4B4;color:#FFE0E6;font-size:12px;font-weight:bold;text-align:center;line-height:19px"></div>
<div class="sw" style="left:436.0px;background:#F3F3F3;border-color:#B4B4B4;color:#FFE0E6;font-size:12px;font-weight:bold;text-align:center;line-height:19px"></div>
<div class="sw" style="left:481.5px;background:#F3F3F3;border-color:#B4B4B4;color:#FFE0E6;font-size:12px;font-weight:bold;text-align:center;line-height:19px"></div>
<div class="sw" style="left:527.0px;background:#F3F3F3;border-color:#B4B4B4;color:#FFE0E6;font-size:12px;font-weight:bold;text-align:center;line-height:19px"></div>
<div class="sw" style="left:572.5px;background:#F3F3F3;border-color:#B4B4B4;color:#FFE0E6;font-size:12px;font-weight:bold;text-align:center;line-height:19px"></div>
<div class="sw" style="left:618.0px;background:#F3F3F3;border-color:#B4B4B4;color:#FFE0E6;font-size:12px;font-weight:bold;text-align:center;line-height:19px"></div>
<div class="sw" style="left:663.5px;background:#F3F3F3;border-color:#B4B4B4;color:#FFE0E6;font-size:12px;font-weight:bold;text-align:center;line-height:19px"></div>
<div class="sw" style="left:709.0px;background:#F3F3F3;border-color:#B4B4B4;color:#FFE0E6;font-size:12px;font-weight:bold;text-align:center;line-height:19px"></div>
<div class="sw" style="left:754.5px;background:#F3F3F3;border-color:#B4B4B4;color:#FFE0E6;font-size:12px;font-weight:bold;text-align:center;line-height:19px"></div>
<div class="sw" style="left:800.0px;background:#F3F3F3;border-color:#B4B4B4;color:#FFE0E6;font-size:12px;font-weight:bold;text-align:center;line-height:19px"></div>
<div class="sw" style="left:845.5px;background:#F3F3F3;border-color:#B4B4B4;color:#FFE0E6;font-size:12px;font-weight:bold;text-align:center;line-height:19px"></div>
<div class="sw" style="left:891.0px;background:#F3F3F3;border-color:#B4B4B4;color:#FFE0E6;font-size:12px;font-weight:bold;text-align:center;line-height:19px"></div>
<div class="sw" style="left:936.5px;background:#F3F3F3;border-color:#B4B4B4;color:#FFE0E6;font-size:12px;font-weight:bold;text-align:center;line-height:19px"></div>
<div class="sw" style="left:982.0px;background:#F3F3F3;border-color:#B4B4B4;color:#FFE0E6;font-size:12px;font-weight:bold;text-align:center;line-height:19px"></div>
<div class="sw" style="left:1027.5px;background:#F3F3F3;border-color:#B4B4B4;color:#FFE0E6;font-size:12px;font-weight:bold;text-align:center;line-height:19px"></div>
<div class="sw" style="left:1073.0px;background:#F3F3F3;border-color:#B4B4B4;color:#FFE0E6;font-size:12px;font-weight:bold;text-align:center;line-height:19px"></div>
<div class="sw" style="left:1118.5px;background:#F3F3F3;border-color:#B4B4B4;color:#FFE0E6;font-size:12px;font-weight:bold;text-align:center;line-height:19px"></div>
<div class="sw" style="left:1164.0px;background:#F3F3F3;border-color:#B4B4B4;color:#FFE0E6;font-size:12px;font-weight:bold;text-align:center;line-height:19px"></div>
<div class="sw" style="left:1209.5px;background:#F3F3F3;border-color:#B4B4B4;color:#FFE0E6;font-size:12px;font-weight:bold;text-align:center;line-height:19px"></div>
<div class="sw" style="left:1255.0px;background:#F3F3F3;border-color:#B4B4B4;color:#FFE0E6;font-size:12px;font-weight:bold;text-align:center;line-height:19px"></div>
<div class="sw" style="left:1300.5px;background:#F3F3F3;border-color:#B4B4B4;color:#FFE0E6;font-size:12px;font-weight:bold;text-align:center;line-height:19px"></div>
<div class="sw" style="left:1346.0px;background:#F3F3F3;border-color:#B4B4B4;color:#FFE0E6;font-size:12px;font-weight:bold;text-align:center;line-height:19px"></div>
<div class="sw" style="left:1391.5px;background:#F3F3F3;border-color:#B4B4B4;color:#FFE0E6;font-size:12px;font-weight:bold;text-align:center;line-height:19px"></div>
<div class="sw" style="left:1437.0px;background:#F3F3F3;border-color:#B4B4B4;color:#FFE0E6;font-size:12px;font-weight:bold;text-align:center;line-height:19px"></div>
<div class="sw" style="left:1482.5px;background:#F3F3F3;border-color:#B4B4B4;color:#FFE0E6;font-size:12px;font-weight:bold;text-align:center;line-height:19px"></div>
<div class="a" style="left:1361px;top:171px;width:410px;height:21px;background:#B7C2CC"></div>
<div class="a" style="left:1364px;top:173px;font-size:13px;color:#333">Design</div>
<div class="a" style="left:1363px;top:220px;width:408px;height:311px;border:1px solid #A9A9A9"></div>
<div class="a" style="left:1369px;top:198px;width:45px;height:23px;border:1px solid #BDBDBD;border-bottom:none;border-radius:4px 4px 0 0;background:#EFEFEF"></div>
<div class="a" style="left:1367px;top:234px;font-size:13px;color:#3A3A3A">File name</div>
<div class="a" style="left:1367px;top:258.5px;font-size:13px;color:#3A3A3A">Design5</div>
<div class="a" style="left:1367px;top:281px;font-size:13px;color:#3A3A3A">Notes</div>
<div class="a" style="left:1368px;top:303px;width:379px;height:131px;border:1px solid #A9A9A9;background:#fff"></div>
<div class="a" style="left:1722px;top:304px;width:24px;height:129px;background:#F2F2F2"></div>
<div class="btn" style="left:1723px;top:306px;width:21px;height:20px"></div>
<div class="btn" style="left:1723px;top:410px;width:21px;height:21px"></div>
<div class="btn" style="left:1657px;top:500px;width:93px;height:28px"></div>
<div class="a" style="left:1657px;top:507px;width:93px;text-align:center;font-size:13px;color:#111">Apply</div>
<div class="a" style="left:1361px;top:538px;width:410px;height:21px;background:#B7C2CC"></div>
<div class="a" style="left:1364px;top:539px;font-size:13px;color:#444">Purchases</div>
<div class="a" style="left:1363px;top:561px;width:408px;height:353px;border:1px solid #A9A9A9"></div>
<div class="a" style="left:1364px;top:609px;width:406px;height:1px;background:#B9B9B9"></div>
<div class="a" style="left:1364px;top:656px;width:406px;height:1px;background:#B9B9B9"></div>
<div class="a" style="left:1403px;top:568px;font-size:14px;font-weight:bold;letter-spacing:0.2px;color:#2A2A2A">AccuQuiltable Basic Tools</div>
<div class="a" style="left:1403px;top:589px;font-size:13px;letter-spacing:0.23px;color:#3A3A3A">Cutting Dies For Quilting</div>
<div class="a" style="left:1403px;top:615px;font-size:14px;font-weight:bold;letter-spacing:0.3px;color:#1F70C2">AccuQuiltable Block Maker</div>
<div class="a" style="left:1403px;top:636px;font-size:13px;letter-spacing:0.26px;color:#3A80CC">Module for creating blocks</div>
<svg class="a" style="left:0;top:0" width="1797" height="1030" viewBox="0 0 1797 1030">
<path d="M82.5,180 H96 M84.5,177.5 V191.5 H95.3 V183.5 M87.5,184.5 L93.5,189.5" fill="none" stroke="#BDBDBD" stroke-width="1.8"/><path d="M82.3,178.5 L84.5,175.5 L86.7,178.5Z" fill="#BDBDBD"/>
<path d="M1339,212.5 L1343,208.5 L1347,212.5" stroke="#555" stroke-width="1.5" fill="none"/>
<path d="M1339,878.5 L1343,882.5 L1347,878.5" stroke="#555" stroke-width="1.5" fill="none"/>
<path d="M117,897 L113,901 L117,905" stroke="#555" stroke-width="1.5" fill="none"/>
<path d="M1320,897 L1324,901 L1320,905" stroke="#555" stroke-width="1.5" fill="none"/>
<path d="M1729.5,318 L1733.5,314 L1737.5,318" stroke="#555" stroke-width="1.5" fill="none"/>
<path d="M1729.5,418.5 L1733.5,422.5 L1737.5,418.5" stroke="#555" stroke-width="1.5" fill="none"/>
<path d="M1756,176.0 L1760,180.5 L1756,185.0 M1761,176.0 L1765,180.5 L1761,185.0" stroke="#5A5A5A" stroke-width="1.4" fill="none"/>
<path d="M1756,543.0 L1760,547.5 L1756,552.0 M1761,543.0 L1765,547.5 L1761,552.0" stroke="#5A5A5A" stroke-width="1.4" fill="none"/>
<circle cx="1388.8" cy="209.7" r="9.3" fill="#C9E7FF"/><circle cx="1388.8" cy="209.7" r="7.8" fill="#1E86DC"/><circle cx="1388.8" cy="205" r="1.5" fill="#D5F0FF"/><rect x="1387.4" y="207.5" width="2.8" height="7.5" fill="#D5F0FF"/>
<circle cx="1383.3" cy="584.8" r="13.8" fill="#A6BA3E"/><path d="M1388,594.8 L1397,600.3 L1393,590.8Z" fill="#A6BA3E"/>
<text x="1383.8" y="592.0" font-family="Liberation Serif" font-weight="bold" font-size="33" fill="#F6FBD8" text-anchor="middle">a</text>
<circle cx="1383.3" cy="631.5" r="13.8" fill="#A6BA3E"/><path d="M1388,641.5 L1397,647.0 L1393,637.5Z" fill="#A6BA3E"/>
<text x="1383.8" y="638.7" font-family="Liberation Serif" font-weight="bold" font-size="33" fill="#F6FBD8" text-anchor="middle">a</text>
<rect x="1684.5" y="577.0" width="17" height="17" fill="none" stroke="#F5CB7A" stroke-width="1.8"/>
<path d="M1688,585.5 L1692.3,590.5 L1701.5,578.0" stroke="#F2A41F" stroke-width="3.2" fill="none" stroke-linejoin="round"/>
<rect x="1708.5" y="572.5" width="34" height="27.5" rx="3" fill="#fff" stroke="#C4C4C4" stroke-width="1.2"/>
<circle cx="1720.5" cy="590.8" r="1.3" fill="#444"/>
<circle cx="1725.8" cy="590.8" r="1.3" fill="#444"/>
<circle cx="1731.2" cy="590.8" r="1.3" fill="#444"/>
<rect x="1684.5" y="623.5" width="17" height="17" fill="none" stroke="#F5CB7A" stroke-width="1.8"/>
<path d="M1688,632 L1692.3,637 L1701.5,624.5" stroke="#F2A41F" stroke-width="3.2" fill="none" stroke-linejoin="round"/>
<rect x="1708.5" y="619" width="34" height="27.5" rx="3" fill="#fff" stroke="#C4C4C4" stroke-width="1.2"/>
<circle cx="1720.5" cy="637.3" r="1.3" fill="#444"/>
<circle cx="1725.8" cy="637.3" r="1.3" fill="#444"/>
<circle cx="1731.2" cy="637.3" r="1.3" fill="#444"/>
<path d="M1369.5,913.5 V937 Q1369.5,940.5 1373,940.5 H1410 Q1413.5,940.5 1413.5,937 V913.5" fill="#F0F0F0" stroke="#BDBDBD" stroke-width="1.2"/>
<path d="M1413.5,913.5 V937 Q1413.5,940.5 1417,940.5 H1455 Q1458.5,940.5 1458.5,937 V913.5" fill="#F0F0F0" stroke="#BDBDBD" stroke-width="1.2"/>
<rect x="1414.2" y="912" width="43.6" height="3" fill="#EFEFEF"/>
<rect x="1378.3" y="919.5" width="2" height="2" fill="#3C78C0"/><rect x="1383" y="919.9" width="14" height="1.3" fill="#7A8FA8"/>
<rect x="1378.3" y="924.5" width="2" height="2" fill="#3C78C0"/><rect x="1383" y="924.9" width="14" height="1.3" fill="#7A8FA8"/>
<rect x="1378.3" y="929.5" width="2" height="2" fill="#3C78C0"/><rect x="1383" y="929.9" width="14" height="1.3" fill="#7A8FA8"/>
<path d="M1425.5,918.5 L1428.5,921 H1441.5 L1440,928 H1429.5Z" fill="#45A84B" stroke="#45A84B" stroke-width="1.5" stroke-linejoin="round"/><circle cx="1430.5" cy="931" r="1.8" fill="#45A84B"/><circle cx="1438" cy="931" r="1.8" fill="#45A84B"/>
<path d="M56,954.5 L50.5,959 L56,963.5Z" fill="#C8C8C8"/>
<path d="M1587.5,954.5 L1596,960.5 L1587.5,966.5Z" fill="#D2D2D2"/>
<path d="M1618.6,958.5 H1634.6 M1626.6,950.5 V966.5" stroke="#3AA648" stroke-width="4.2"/>
<path d="M1656,958.5 H1671" stroke="#E8392F" stroke-width="4"/>
<rect x="1692" y="952.5" width="16" height="11" rx="1" fill="none" stroke="#555" stroke-width="1.5"/><path d="M1700,963.5 V966 M1696,966.5 H1704" stroke="#555" stroke-width="1.5"/>
<circle cx="1736" cy="952.5" r="1.9" fill="#555"/>
<circle cx="1736" cy="958.5" r="1.9" fill="#555"/>
<circle cx="1736" cy="964.5" r="1.9" fill="#555"/>
</svg>
<div class="a" style="left:1351px;top:982px;font-size:13px;letter-spacing:0.42px;color:#333;white-space:nowrap">Total: 223, Selected: 0 - Quilt 32.00 x 40.00 in</div>
</body></html>
